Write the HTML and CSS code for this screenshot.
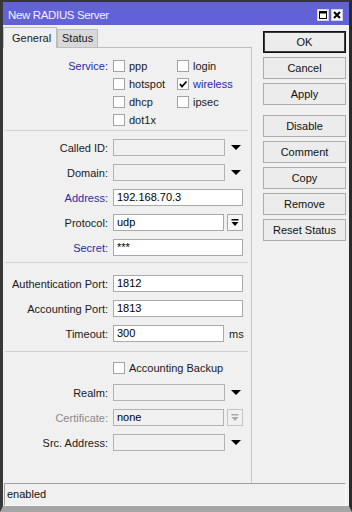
FILE: index.html
```html
<!DOCTYPE html>
<html>
<head>
<meta charset="utf-8">
<link rel="stylesheet" href="styles.css">
</head>
<body>
<div class="window">
  <div class="titlebar">
    <span class="title">New RADIUS Server</span>
    <div class="wbtns">
      <span class="wb"><svg width="10" height="10" viewBox="0 0 10 10"><rect x="1.5" y="1.5" width="7" height="7" fill="none" stroke="#000" stroke-width="1"/><rect x="1" y="1" width="8" height="2.5" fill="#000"/></svg></span>
      <span class="wb"><svg width="10" height="10" viewBox="0 0 10 10"><path d="M2 2L8 8M8 2L2 8" stroke="#000" stroke-width="2" fill="none"/></svg></span>
    </div>
  </div>
  <div class="client">
    <div class="main">
      <div class="leftcol">
        <div class="tabs">
          <div class="tab active">General</div>
          <div class="tab">Status</div>
          <div class="tabfill"></div>
        </div>
        <div class="panel">
          <div class="svc">
            <span class="lbl blue">Service:</span>
            <div class="checks">
              <div class="chk"><span class="box"></span>ppp</div>
              <div class="chk"><span class="box"></span>login</div>
              <div class="chk"><span class="box"></span>hotspot</div>
              <div class="chk blue"><span class="box"><svg width="10" height="10" viewBox="0 0 10 10"><path d="M2 5L4 7.5L8.5 2.5" stroke="#000" stroke-width="1.8" fill="none"/></svg></span>wireless</div>
              <div class="chk"><span class="box"></span>dhcp</div>
              <div class="chk"><span class="box"></span>ipsec</div>
              <div class="chk"><span class="box"></span>dot1x</div>
            </div>
          </div>
          <div class="sep"></div>
          <div class="group g1">
            <div class="row"><span class="lbl">Called ID:</span><div class="field"><div class="inp short grey"></div><svg class="arrow" width="10" height="5" viewBox="0 0 10 5"><path d="M0 0H10L5 5Z" fill="#000"/></svg></div></div>
            <div class="row"><span class="lbl">Domain:</span><div class="field"><div class="inp short grey"></div><svg class="arrow" width="10" height="5" viewBox="0 0 10 5"><path d="M0 0H10L5 5Z" fill="#000"/></svg></div></div>
            <div class="row"><span class="lbl blue">Address:</span><div class="field"><div class="inp">192.168.70.3</div></div></div>
            <div class="row"><span class="lbl">Protocol:</span><div class="field"><div class="inp mid">udp</div><span class="dbtn"><svg width="8" height="8" viewBox="0 0 8 8"><rect x="0.5" y="0" width="7" height="1.5" fill="#000"/><path d="M0.5 3H7.5L4 7Z" fill="#000"/></svg></span></div></div>
            <div class="row"><span class="lbl blue">Secret:</span><div class="field"><div class="inp">***</div></div></div>
          </div>
          <div class="sep s2"></div>
          <div class="group g2">
            <div class="row"><span class="lbl">Authentication Port:</span><div class="field"><div class="inp">1812</div></div></div>
            <div class="row"><span class="lbl">Accounting Port:</span><div class="field"><div class="inp">1813</div></div></div>
            <div class="row"><span class="lbl">Timeout:</span><div class="field"><div class="inp mid">300</div><span class="unit">ms</span></div></div>
          </div>
          <div class="sep s3"></div>
          <div class="group g3">
            <div class="row"><span class="lbl"></span><div class="field"><div class="chk"><span class="box"></span>Accounting Backup</div></div></div>
            <div class="row"><span class="lbl">Realm:</span><div class="field"><div class="inp short grey"></div><svg class="arrow" width="10" height="5" viewBox="0 0 10 5"><path d="M0 0H10L5 5Z" fill="#000"/></svg></div></div>
            <div class="row"><span class="lbl dis">Certificate:</span><div class="field"><div class="inp mid grey">none</div><span class="dbtn off"><svg width="8" height="8" viewBox="0 0 8 8"><rect x="0.5" y="0" width="7" height="1.5" fill="#a8a8a8"/><path d="M0.5 3H7.5L4 7Z" fill="#a8a8a8"/></svg></span></div></div>
            <div class="row"><span class="lbl">Src. Address:</span><div class="field"><div class="inp short grey"></div><svg class="arrow" width="10" height="5" viewBox="0 0 10 5"><path d="M0 0H10L5 5Z" fill="#000"/></svg></div></div>
          </div>
        </div>
      </div>
      <div class="buttons">
        <div class="btn def">OK</div>
        <div class="btn">Cancel</div>
        <div class="btn">Apply</div>
        <div class="btn sp">Disable</div>
        <div class="btn">Comment</div>
        <div class="btn">Copy</div>
        <div class="btn">Remove</div>
        <div class="btn">Reset Status</div>
      </div>
    </div>
    <div class="statusbar">enabled</div>
  </div>
</div>
</body>
</html>
```
FILE: styles.css
```css
* { box-sizing: border-box; }
html, body { margin: 0; padding: 0; }
body {
  width: 352px;
  height: 512px;
  overflow: hidden;
  font-family: "Liberation Sans", Arial, sans-serif;
  font-size: 11px;
  color: #1a1a1a;
  background: #f0f0f0;
}
.window {
  width: 352px;
  height: 512px;
  display: flex;
  flex-direction: column;
  border-style: solid;
  border-color: #363636 #2a2a2a #a6a6a6 #383838;
  border-width: 2px 3px 6px 3px;
  background: #f0f0f0;
}
.titlebar {
  height: 23px;
  flex: none;
  background: #6262d6;
  display: flex;
  align-items: center;
  justify-content: space-between;
  padding: 3px 6px 0 5px;
  color: #f2f2ff;
}
.title { font-size: 11.5px; letter-spacing: -0.35px; }
.wbtns { display: flex; gap: 2px; }
.wb {
  width: 12px;
  height: 12px;
  background: #fff;
  border: 1px solid #d0d0e8;
  display: flex;
  align-items: center;
  justify-content: center;
}
.client { flex: 1; display: flex; flex-direction: column; }
.main { flex: 1; display: flex; }
.leftcol { width: 249px; display: flex; flex-direction: column; }
.tabs { height: 23px; display: flex; align-items: flex-end; flex: none; }
.tab {
  height: 19px;
  padding: 0 4px;
  border: 1px solid #bdbdbd;
  background: #d9d9d9;
  line-height: 17px;
}
.tab.active {
  height: 21px;
  width: 54px;
  padding-left: 8px;
  border-bottom: none;
  background: #f0f0f0;
  line-height: 20px;
}
.tabfill { flex: 1; height: 1px; border-bottom: 1px solid #bdbdbd; }
.panel {
  flex: 1;
  border-right: 1px solid #c9c9c9;
  padding-top: 9px;
}
.lbl { text-align: right; white-space: nowrap; }
.blue { color: #2a2aa8; }
.dis { color: #8a8a8a; }
.svc { display: grid; grid-template-columns: 105px 1fr; column-gap: 5px; }
.svc .lbl { line-height: 18px; }
.checks { display: grid; grid-template-columns: 64px 64px; grid-auto-rows: 18px; }
.chk { display: flex; align-items: center; gap: 4px; white-space: nowrap; }
.box {
  width: 12px;
  height: 12px;
  border: 1px solid #a3a3a3;
  background: #fff;
  display: flex;
  align-items: center;
  justify-content: center;
  flex: none;
}
.sep { height: 1px; background: #d0d0d0; margin: 1px 3px 0 2px; }
.sep.s2 { margin-top: 2px; }
.sep.s3 { margin-top: 5px; }
.g1 { padding-top: 4px; }
.g2 { padding-top: 8px; }
.g3 { padding-top: 3px; }
.row {
  display: grid;
  grid-template-columns: 105px 1fr;
  column-gap: 5px;
  align-items: center;
  height: 25px;
}
.field { display: flex; align-items: center; }
.inp {
  width: 130px;
  height: 17px;
  border: 1px solid #a9a9a9;
  background: #fff;
  padding-left: 3px;
  line-height: 15px;
  color: #000;
}
.inp.short { width: 112px; }
.inp.mid { width: 111px; }
.inp.grey { background: #f0f0f0; border-color: #b2b2b2; }
.arrow { margin-left: 6px; display: block; }
.dbtn {
  width: 16px;
  height: 17px;
  margin-left: 3px;
  border: 1px solid #a9a9a9;
  background: #f7f7f7;
  display: flex;
  align-items: center;
  justify-content: center;
}
.dbtn.off { background: #f0f0f0; border-color: #c4c4c4; }
.unit { margin-left: 5px; }
.buttons {
  width: 83px;
  margin-left: 11px;
  padding-top: 6px;
  display: flex;
  flex-direction: column;
  gap: 4px;
}
.btn {
  height: 22px;
  border: 1px solid #acacac;
  background: #ececec;
  display: flex;
  align-items: center;
  justify-content: center;
  color: #111;
}
.btn.def { border-color: #111; box-shadow: inset 0 0 0 1px #3c3c3c; }
.btn.sp { margin-top: 6px; }
.statusbar {
  height: 23px;
  flex: none;
  margin: 0 3px 0 1px;
  border: 1px solid;
  border-color: #a0a0a0 #f8f8f8 #f8f8f8 #a0a0a0;
  padding-left: 2px;
  line-height: 21px;
  color: #111;
}
```
